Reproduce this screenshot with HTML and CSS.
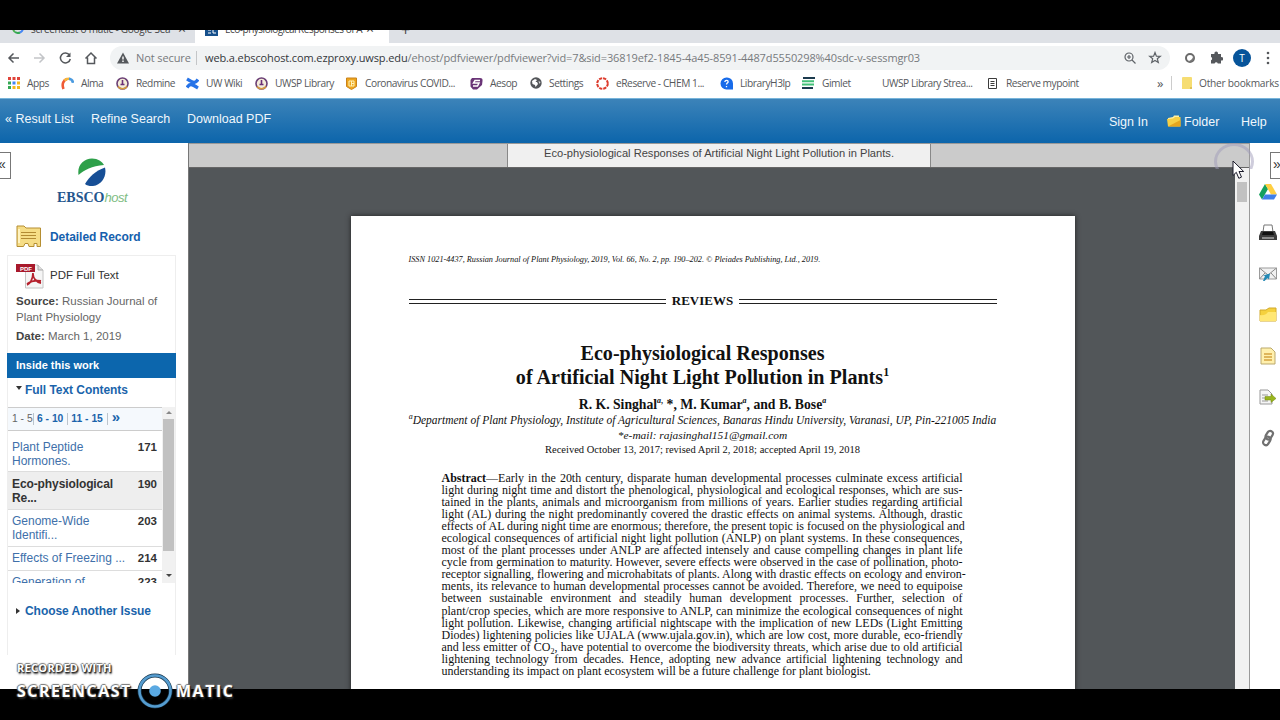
FILE: index.html
```html
<!DOCTYPE html>
<html lang="en">
<head>
    <meta charset="utf-8">
    <title>Eco-physiological Responses of Artificial Night Light Pollution in Plants.</title>
    <link rel="stylesheet" href="styles.css">
</head>
<body>
    <!-- Browser tabs -->
    <div class="tabs">
        <div class="tab tab-search">
            <svg width="12" height="12" viewBox="0 0 12 12" fill="none" stroke-width="2"><path d="M2 3A5 5 0 0 0 3 10" stroke="#4caf50"/><path d="M3 10a5 5 0 0 0 5 .5" stroke="#34a853"/><path d="M8 10.500A5 5 0 0 0 11 6" stroke="#4285f4"/></svg>
            <span class="tab-title">screencast o matic - Google Sea</span><span class="tab-x">×</span>
        </div>
        <div class="tab tab-active">
            <svg width="13" height="14" viewBox="0 0 13 14"><rect width="13" height="14" fill="#16508c"/><path d="M3 5h3M3 8h3M3 11h3M8 4v7h3" stroke="#fff" fill="none"/></svg>
            <span class="tab-title">Eco-physiological Responses of A</span><span class="tab-x">×</span>
        </div>
        <div class="tab-new">+</div>
    </div>

    <!-- Address bar -->
    <div class="toolbar">
        <svg class="nav-icons" width="100" height="16" viewBox="0 0 100 16" fill="none" stroke="#55585c" stroke-width="1.500">
            <path d="M19 8H9M13.500 3.500L9 8l4.500 4.500"/>
            <path d="M34 8h10M39.500 3.500L44 8l-4.500 4.500" stroke="#c3c5c8"/>
            <path d="M69.500 5A5 5 0 1 0 70.300 9"/><path d="M70.500 2.500v4.500h-4.500z" fill="#55585c" stroke="none"/>
            <path d="M85.500 8.500L91 3l5.500 5.500M87.500 7.500v6h7v-6"/>
        </svg>
        <div class="address">
            <svg width="12" height="12" viewBox="0 0 12 12"><path d="M6 .5L12 11.500H0z" fill="#55585c"/><path d="M5.300 4.500h1.400v3H5.300zM5.300 8.500h1.400v1.400H5.300z" fill="#fff"/></svg>
            <span class="not-secure">Not secure</span>
            <span class="url"><b>web.a.ebscohost.com.ezproxy.uwsp.edu</b>/ehost/pdfviewer/pdfviewer?vid=7&amp;sid=36819ef2-1845-4a45-8591-4487d5550298%40sdc-v-sessmgr03</span>
            <svg class="address-actions" width="42" height="14" viewBox="0 0 42 14" fill="none" stroke="#5f6368" stroke-width="1.200"><circle cx="6" cy="6" r="4"/><path d="M9 9l3.500 3.500M4 6h4M6 4v4"/><path d="M32 1.500l1.400 3.600 3.900.2-3 2.400 1 3.800-3.300-2.100-3.300 2.100 1-3.800-3-2.400 3.900-.2z"/></svg>
        </div>
        <div class="toolbar-right">
            <svg width="12" height="12" viewBox="0 0 12 12"><circle cx="6" cy="6" r="4" fill="#fff" stroke="#6a6a6a" stroke-width="2"/><path d="M9.500 3.500a4.500 4.500 0 0 1-6 6q5-1 6-6z" fill="#777"/></svg>
            <svg width="13" height="13" viewBox="0 0 13 13" fill="#55585c"><path d="M1 3h3.500a1.800 1.800 0 1 1 3.400 0H11v3.200a1.700 1.700 0 1 1 0 3.300V12.500H7.800a1.700 1.700 0 0 0-3.200 0H1V9.300a1.700 1.700 0 0 0 0-3.200z"/></svg>
            <span class="avatar">T</span>
            <svg width="4" height="14" viewBox="0 0 4 14" fill="#55585c"><circle cx="2" cy="2" r="1.300"/><circle cx="2" cy="7" r="1.300"/><circle cx="2" cy="12" r="1.300"/></svg>
        </div>
    </div>

    <!-- Bookmarks -->
    <div class="bookmarks">
        <div class="bookmark">
            <svg width="12" height="12" viewBox="0 0 12 12"><g fill="#e0443a"><path d="M0 0h3v3H0zM4.500 0h3v3h-3zM9 0h3v3H9z"/></g><path d="M0 4.500h3v3H0z" fill="#34a853"/><path d="M4.500 4.500h3v3h-3z" fill="#4285f4"/><path d="M9 4.500h3v3H9zM4.500 9h3v3h-3zM9 9h3v3H9z" fill="#f4b91e"/><path d="M0 9h3v3H0z" fill="#34a853"/></svg>
            <span>Apps</span>
        </div>
        <div class="bookmark">
            <svg width="13" height="13" viewBox="0 0 13 13" fill="none" stroke-width="2.600"><path d="M2.500 12C.5 7 2.500 3 6 2" stroke="#ef5a35"/><path d="M3.500 3.500C5 2 7 1.500 9 2" stroke="#f6b73c"/><path d="M8 1.800c2 .2 3.600 1.500 4 4" stroke="#4b9be0"/></svg>
            <span>Alma</span>
        </div>
        <div class="bookmark">
            <svg width="13" height="13" viewBox="0 0 13 13"><circle cx="6.500" cy="6.500" r="5.500" fill="#f4ecda" stroke="#6b3f75" stroke-width="1.600"/><path d="M2 9.500a5.500 5.500 0 0 0 9 0" fill="none" stroke="#d69a3c" stroke-width="1.500"/><path d="M6.500 3v5M4.500 7.500h4" stroke="#6b2f78" stroke-width="1.600"/></svg>
            <span>Redmine</span>
        </div>
        <div class="bookmark">
            <svg width="13" height="13" viewBox="0 0 13 13" fill="none" stroke="#2673e8" stroke-width="3.400"><path d="M1 10.500C4 6 5.500 7 12 11"/><path d="M12 2.500C9 7 7.500 6 1 2"/></svg>
            <span>UW Wiki</span>
        </div>
        <div class="bookmark">
            <svg width="13" height="13" viewBox="0 0 13 13"><circle cx="6.500" cy="6.500" r="5.500" fill="#f4ecda" stroke="#6b3f75" stroke-width="1.600"/><path d="M2 9.500a5.500 5.500 0 0 0 9 0" fill="none" stroke="#d69a3c" stroke-width="1.500"/><path d="M6.500 3v5M4.500 7.500h4" stroke="#6b2f78" stroke-width="1.600"/></svg>
            <span>UWSP Library</span>
        </div>
        <div class="bookmark">
            <svg width="13" height="13" viewBox="0 0 13 13"><path d="M1.500 1h10v8.500l-5 3-5-3z" fill="#eda51d" stroke="#c9821a"/><path d="M4 4h5v5H4zM6 6.500h3M6.500 4v5" fill="none" stroke="#fff2b8"/></svg>
            <span>Coronavirus COVID...</span>
        </div>
        <div class="bookmark">
            <svg width="13" height="13" viewBox="0 0 13 13"><path d="M2 1h8q3 0 2.500 3l-.5 4-5 4.500H3L.5 9.500V3z" fill="#6a3477"/><path d="M10 3.500H5L3.500 6H9L7.500 9H3" fill="none" stroke="#fff" stroke-width="1.500"/></svg>
            <span>Aesop</span>
        </div>
        <div class="bookmark">
            <svg width="12" height="12" viewBox="0 0 12 12"><circle cx="6" cy="6" r="5.700" fill="#54565a"/><path d="M2 4l3-2 2 1-1.500 2H7l1 2-2.500 3L5 8 2.500 7z" fill="#fff"/><path d="M8.500 4l2 1-1 2z" fill="#ddd"/></svg>
            <span>Settings</span>
        </div>
        <div class="bookmark">
            <svg width="13" height="13" viewBox="0 0 13 13"><circle cx="6.500" cy="6.500" r="5.300" fill="none" stroke="#dd3b2c" stroke-width="2" stroke-dasharray="3.200 .96"/></svg>
            <span>eReserve - CHEM 1...</span>
        </div>
        <div class="bookmark">
            <svg width="13" height="13" viewBox="0 0 13 13"><path d="M6.500.5a6 6 0 1 0 0 12H13V6.500a6 6 0 0 0-6.500-6z" fill="#176bea"/><path d="M4.800 5Q5 3.200 6.700 3.300T8 5.300Q6.500 6 6.500 7.500M6.500 9v1.300" fill="none" stroke="#fff" stroke-width="1.300"/></svg>
            <span>LibraryH3lp</span>
        </div>
        <div class="bookmark">
            <svg width="14" height="12" viewBox="0 0 14 12"><path d="M2 0h12v2H2zM1 10h11v2H1z" fill="#1c3b4e"/><path d="M1 3.300h12v2H1zM1 6.600h12v2H1z" fill="#43c078"/></svg>
            <span>Gimlet</span>
        </div>
        <div class="bookmark"><span>UWSP Library Strea...</span></div>
        <div class="bookmark">
            <svg class="doc" width="9" height="11" viewBox="0 0 9 11" fill="none" stroke="#3c3c3c"><path d="M.5.5h8v10h-8zM2.500 3.500h4M2.500 5.500h4M2.500 7.500h4"/></svg>
            <span>Reserve mypoint</span>
        </div>
        <div class="bookmark more">»</div>
        <div class="bookmark other">
            <svg width="10" height="12" viewBox="0 0 10 12"><path d="M0 1q0-1 1-1h8q1 0 1 1v11H0z" fill="#f6dd72"/><path d="M8 10h2v2H8z" fill="#e0c256"/></svg>
            <span>Other bookmarks</span>
        </div>
    </div>

    <!-- EBSCO header -->
    <div class="header">
        <div class="header-left">
            <a class="h-result">« Result List</a>
            <a class="h-refine">Refine Search</a>
            <a class="h-download">Download PDF</a>
        </div>
        <div class="header-right">
            <a class="h-sign">Sign In</a>
            <a class="h-folder"><svg width="14" height="12" viewBox="0 0 14 12"><path d="M1 3l5-1 1-1.500h5V5H1z" fill="#fff0a5"/><path d="M0 4l6-.5L8 2h5.500v9.500H1z" fill="#f5cf45"/><path d="M1 11.500L13.500 5v6.500z" fill="#e5a51e"/></svg><span>Folder</span></a>
            <a class="h-help">Help</a>
        </div>
    </div>

    <div class="main">
        <!-- Left column -->
        <div class="sidebar">
            <div class="collapse">«</div>
            <div class="logo">
                <svg width="28" height="29" viewBox="0 0 28 29"><path d="M.5 17C-1 7 6 .5 14 .5c6 0 10 3 12 6.500C14 8 6 12 .5 17z" fill="#2ea04a"/><path d="M27 9.500C29 18 24 27 15 28c-3 .3-6-.3-8-2C11 19 17 13 27 9.500z" fill="#174f96"/></svg>
                <div class="logo-text"><b>EBSCO</b><i>host</i></div>
            </div>
            <div class="record">
                <svg width="26" height="22" viewBox="0 0 26 22"><path d="M1 1h7l2 2h14.500v18.500H21v-3h-3v3h-5l-1-3H9l-1.500 3H1z" fill="#f6dd86" stroke="#b58e32"/><path d="M3 4v14" stroke="#fff3c0" stroke-width="2"/><path d="M5 7.500h15M5 10.500h15M5 13.500h15" stroke="#b38b33"/></svg>
                <a>Detailed Record</a>
            </div>
            <div class="box">
                <div class="fulltext">
                    <svg width="28" height="26" viewBox="0 0 28 26"><path d="M9.500 2H22l5 5v18H9.500z" fill="#f5f5f5" stroke="#c4c4c4"/><path d="M22 2v5h5" fill="#ddd" stroke="#aaa"/><path d="M0 1h19v8H0z" fill="#a8192b"/><path d="M11 22c3-1 6-6 6-12M17 11c0 4 3 8 8 9M11 21c4-3 9-4 14-3" fill="none" stroke="#b5202c" stroke-width="1.800"/><text x="4" y="7.500" class="pdf-label">PDF</text></svg>
                    <span>PDF Full Text</span>
                </div>
                <p class="meta source"><b>Source:</b> Russian Journal of<br>Plant Physiology</p>
                <p class="meta"><b>Date:</b> March 1, 2019</p>
                <h3>Inside this work</h3>
                <div class="contents-title"><span class="tri-down"></span><a>Full Text Contents</a></div>
                <div class="contents">
                    <div class="contents-list">
                        <div class="pager"><span>1 - 5</span><a>6 - 10</a><a>11 - 15</a><a class="next">»</a></div>
                        <div class="entry first"><a>Plant Peptide<br>Hormones.</a><b>171</b></div>
                        <div class="entry current"><a>Eco-physiological<br>Re...</a><b>190</b></div>
                        <div class="entry third"><a>Genome-Wide<br>Identifi...</a><b>203</b></div>
                        <div class="entry fourth"><a>Effects of Freezing ...</a><b>214</b></div>
                        <div class="entry last"><a>Generation of</a><b>223</b></div>
                    </div>
                    <div class="scroll">
                        <span class="arrow-up"></span>
                        <span class="scroll-thumb"></span>
                        <span class="arrow-down"></span>
                    </div>
                </div>
                <div class="choose"><span class="tri-right"></span><a>Choose Another Issue</a></div>
            </div>
        </div>

        <!-- PDF viewer -->
        <div class="viewer">
            <div class="viewer-title"><span>Eco-physiological Responses of Artificial Night Light Pollution in Plants.</span></div>
            <div class="viewer-body">
                <div class="canvas">
                    <div class="page">
                        <div class="issn">ISSN 1021-4437, Russian Journal of Plant Physiology, 2019, Vol. 66, No. 2, pp. 190–202. © Pleiades Publishing, Ltd., 2019.</div>
                        <div class="reviews"><span class="rule"></span><b>REVIEWS</b><span class="rule"></span></div>
                        <h1>Eco-physiological Responses<br>of Artificial Night Light Pollution in Plants<sup>1</sup></h1>
                        <div class="authors">R. K. Singhal<sup><i>a</i>,</sup> *, M. Kumar<sup><i>a</i></sup>, and B. Bose<sup><i>a</i></sup></div>
                        <div class="dept"><sup>a</sup>Department of Plant Physiology, Institute of Agricultural Sciences, Banaras Hindu University, Varanasi, UP, Pin-221005 India</div>
                        <div class="email">*e-mail: rajasinghal151@gmail.com</div>
                        <div class="received">Received October 13, 2017; revised April 2, 2018; accepted April 19, 2018</div>
                        <div class="abstract">
                            <div><b>Abstract</b>—Early in the 20th century, disparate human developmental processes culminate excess artificial</div>
                            <div>light during night time and distort the phenological, physiological and ecological responses, which are sus-</div>
                            <div>tained in the plants, animals and microorganism from millions of years. Earlier studies regarding artificial</div>
                            <div>light (AL) during the night predominantly covered the drastic effects on animal systems. Although, drastic</div>
                            <div>effects of AL during night time are enormous; therefore, the present topic is focused on the physiological and</div>
                            <div>ecological consequences of artificial night light pollution (ANLP) on plant systems. In these consequences,</div>
                            <div>most of the plant processes under ANLP are affected intensely and cause compelling changes in plant life</div>
                            <div>cycle from germination to maturity. However, severe effects were observed in the case of pollination, photo-</div>
                            <div>receptor signalling, flowering and microhabitats of plants. Along with drastic effects on ecology and environ-</div>
                            <div>ments, its relevance to human developmental processes cannot be avoided. Therefore, we need to equipoise</div>
                            <div>between sustainable environment and steadily human development processes. Further, selection of</div>
                            <div>plant/crop species, which are more responsive to ANLP, can minimize the ecological consequences of night</div>
                            <div>light pollution. Likewise, changing artificial nightscape with the implication of new LEDs (Light Emitting</div>
                            <div>Diodes) lightening policies like UJALA (www.ujala.gov.in), which are low cost, more durable, eco-friendly</div>
                            <div>and less emitter of CO<sub>2</sub>, have potential to overcome the biodiversity threats, which arise due to old artificial</div>
                            <div>lightening technology from decades. Hence, adopting new advance artificial lightening technology and</div>
                            <div class="end">understanding its impact on plant ecosystem will be a future challenge for plant biologist.</div>
                        </div>
                    </div>
                </div>
                <div class="viewer-scroll"><span class="thumb"></span></div>
            </div>
        </div>

        <!-- Tools -->
        <div class="tools">
            <div class="expand">»</div>
            <svg width="18" height="16" viewBox="0 0 18 16"><path d="M6 0L0 10.500 3 15.500 9 5z" fill="#14a05e"/><path d="M6 0h6l6 10.500h-6z" fill="#ffcf42"/><path d="M6 10.500h12L15 15.500H3z" fill="#3f7fe8"/></svg>
            <svg width="18" height="18" viewBox="0 0 18 18"><path d="M4 8L5 1h8l1 7z" fill="#fff" stroke="#777"/><path d="M2 7h14l2 5v4H0v-4z" fill="#3c3c3c"/><path d="M4 8h10l1 3H3z" fill="#111"/><path d="M3 14h12" stroke="#ddd"/></svg>
            <svg width="18" height="16" viewBox="0 0 18 16"><path d="M.5 2h17v11H.5z" fill="#f1f1f1" stroke="#9b9b9b"/><path d="M.5 2L9 9l8.500-7M.5 13L6 7M17.500 13L12 7" fill="none" stroke="#888"/><path d="M4 15l2-5-2-.5 7-2-1 6-1.500-1.500-3 3z" fill="#2389b5"/></svg>
            <svg width="18" height="16" viewBox="0 0 18 16"><path d="M1 15V4h6l3-2h7v13z" fill="#f5d13e" stroke="#d2aa2a"/><path d="M1 9q5 1 8-3h8v9H1z" fill="#ffe775"/></svg>
            <svg width="16" height="18" viewBox="0 0 16 18"><path d="M1 1h10l4 4v12H1z" fill="#fff0ad" stroke="#bba96c"/><path d="M4 7h8M4 10h8M4 13h8" stroke="#d5a33f" stroke-width="1.500"/></svg>
            <svg width="18" height="16" viewBox="0 0 18 16"><path d="M1 1h8l4 4v10H1z" fill="#f5f5f5" stroke="#999"/><path d="M3 6h6M3 9h4M3 12h6" stroke="#999"/><path d="M6 7.500h6V5l5 4.500-5 4v-2.500H6z" fill="#99b51d" stroke="#71870f" stroke-width=".5"/></svg>
            <svg width="14" height="18" viewBox="0 0 14 18" fill="none" stroke="#707070" stroke-width="2.200"><rect x="5.500" y="1.500" width="5.500" height="9" rx="2.700" transform="rotate(32 8 6)"/><rect x="3" y="7.500" width="5.500" height="9" rx="2.700" transform="rotate(32 6 12)"/></svg>
        </div>
    </div>

    <!-- Recorder watermark -->
    <div class="watermark">
        <div class="recorded">RECORDED WITH</div>
        <div class="brand"><span class="screencast">SCREENCAST</span>
            <svg width="36" height="36" viewBox="0 0 36 36"><circle cx="18" cy="18" r="15.500" fill="none" stroke="#16374f" stroke-width="4"/><circle cx="18" cy="18" r="15.500" fill="none" stroke="#559ccf" stroke-width="2.600"/><circle cx="18" cy="18" r="5.800" fill="#5aa9e2"/></svg>
            <span class="matic">MATIC</span></div>
    </div>

    <!-- Mouse -->
    <div class="pointer-ring"></div>
    <svg class="pointer" width="13" height="20" viewBox="0 0 13 20"><path d="M1 1v14.500l3.300-3.200 2.500 6 2.700-1.200-2.500-5.600h4.700z" fill="#fff" stroke="#1a1a2a"/></svg>
</body>
</html>
```
FILE: styles.css
```css
* {
    box-sizing: border-box;
}

body {
    margin: 0;
    width: 1280px;
    height: 720px;
    overflow: hidden;
    position: relative;
    background-color: #000;
    padding-top: 30px;
    font-family: "Liberation Sans", Arial, sans-serif;
    font-size: 12px;
    color: #333;
}

svg {
    flex: none;
    display: block;
}

/* Browser */
.tabs {
    height: 13px;
    background-color: #dee1e6;
    display: flex;
    overflow: hidden;
    font: 10px/14px "Open Sans", sans-serif;
    color: #444;
}

.tab {
    height: 26px;
    margin-top: -8px;
    display: flex;
    gap: 7px;
    padding-left: 12px;
    white-space: nowrap;
}

.tab-search {
    width: 195px;
}

.tab-active {
    width: 194px;
    background-color: #fff;
    padding-left: 10px;
}

.tab-title {
    width: 140px;
    letter-spacing: -.25px;
}

.tab-x {
    font-size: 14px;
}

.tab-active .tab-title {
    width: 134px;
    letter-spacing: -.5px;
}

.tab-new {
    margin: -7px 0 0 12px;
    font-size: 16px;
}

.toolbar {
    height: 29px;
    background-color: #fff;
    display: flex;
    align-items: center;
    font-family: "Open Sans", sans-serif;
}

.nav-icons {
    margin-right: 10px;
}

.address {
    width: 1060px;
    height: 24px;
    border-radius: 12px;
    background-color: #f1f3f4;
    display: flex;
    align-items: center;
    padding-left: 7px;
    font-size: 11px;
    white-space: nowrap;
}

.not-secure {
    width: 61px;
    margin-left: 7px;
    padding-right: 6px;
    border-right: 1px solid #c4c6c8;
    line-height: 14px;
    color: #77797c;
    letter-spacing: -.1px;
}

.url {
    width: 716px;
    margin-left: 8px;
    color: #777a7d;
    letter-spacing: -.12px;
}

.url b {
    font-weight: normal;
    color: #34373b;
}

.address-actions {
    margin-left: auto;
    margin-right: 5px;
}

.toolbar-right {
    display: flex;
    align-items: center;
    margin-left: 14px;
}

.toolbar-right svg:nth-child(2) {
    margin-left: 14px;
}

.avatar {
    width: 18px;
    height: 18px;
    border-radius: 50%;
    background-color: #07549a;
    color: #fff;
    font-size: 10px;
    line-height: 18px;
    text-align: center;
    margin: 0 15px 0 10px;
}

.bookmarks {
    height: 26px;
    background-color: #fff;
    display: grid;
    grid-template-columns: 53px 55px 70px 69px 90px 125px 60px 66px 124px 81px 81px 106px 169px 14px 1fr;
    padding: 0 0 4px 8px;
    align-items: center;
    font: 10.200px/14px "Open Sans", sans-serif;
    letter-spacing: -.45px;
    color: #56585b;
    white-space: nowrap;
}

.bookmark {
    display: flex;
    align-items: center;
}

.bookmark span {
    margin-left: 7px;
}

.bookmark:nth-child(12) span {
    margin-left: 0;
}

.more {
    font-size: 13px;
}

.other {
    border-left: 1px solid #ccc;
    padding-left: 10px;
}

.bookmark.other span {
    letter-spacing: -.25px;
}

.bookmark .doc + span {
    margin-left: 9px;
}

/* EBSCO header */
.header {
    height: 45px;
    background: linear-gradient(#3c83b9, #0c65ab);
    border-top: 1px solid #77b4da;
    display: flex;
    justify-content: space-between;
    color: #f0f7fc;
    font-size: 12.500px;
}

.header-left {
    display: flex;
    padding: 13px 0 0 5px;
}

.h-result {
    width: 86px;
}

.h-refine {
    width: 96px;
}

.header-right {
    display: flex;
    padding: 16px 0 0;
}

.h-sign {
    width: 58px;
}

.h-folder {
    width: 74px;
    display: flex;
    gap: 3px;
}

.h-help {
    width: 39px;
}

/* Main area */
.main {
    height: 546px;
    display: flex;
    background-color: #fff;
}

.sidebar {
    width: 188px;
    height: 546px;
    position: relative;
    padding-top: 15px;
}

.collapse {
    position: absolute;
    left: -3px;
    top: 9px;
    width: 14px;
    height: 27px;
    border: 1px solid #777;
    font-size: 14px;
    line-height: 23px;
}

.logo {
    display: flex;
    flex-direction: column;
    align-items: center;
    width: 184px;
}

.logo-text {
    display: flex;
    align-items: baseline;
    margin-top: 3px;
    font: 14px/16px "Liberation Serif", serif;
    color: #24558d;
}

.logo-text i {
    font: italic 13px/16px "Liberation Sans", sans-serif;
    color: #7dbc82;
    letter-spacing: -.5px;
}

.record {
    display: flex;
    align-items: center;
    height: 22px;
    margin: 19px 0 0 16px;
    font-size: 12px;
    font-weight: bold;
    color: #1560ad;
    gap: 8px;
}

.record a {
    padding-top: 2px;
    letter-spacing: -.05px;
}

.box {
    margin: 8px 0 0 7px;
    width: 169px;
    height: 400px;
    border: 1px solid #eee;
    border-bottom: 0;
}

.fulltext {
    display: flex;
    align-items: center;
    gap: 6px;
    padding: 6px 0 0 8px;
    height: 34px;
    color: #333;
    font-size: 11.500px;
}

.fulltext span {
    padding-bottom: 3px;
}

.pdf-label {
    font: bold 6px "Liberation Sans", sans-serif;
    fill: #fff;
}

.meta {
    margin: 3px 0 0 8px;
    line-height: 16px;
    font-size: 11.500px;
    color: #666;
}

.meta b {
    color: #444;
}

.box h3 {
    margin: 9px -1px 0;
    height: 25px;
    background-color: #0c66ad;
    color: #fff;
    font-size: 11px;
    line-height: 24px;
    padding-left: 9px;
}

.contents-title,
.choose {
    display: flex;
    color: #1a64ab;
    font-weight: bold;
    line-height: 24px;
    letter-spacing: -.05px;
}

.contents-title {
    height: 29px;
    padding-left: 8px;
}

.tri-down {
    border: 3px solid transparent;
    border-top: 4px solid #333;
    height: 4px;
    margin: 8px 3px 0 0;
}

.contents {
    display: flex;
    height: 176px;
    overflow: hidden;
}

.contents-list {
    width: 154px;
}

.pager {
    height: 24px;
    background-color: #f5f9fd;
    border-top: 1px solid #ccc;
    border-bottom: 1px solid #ccc;
    font-size: 10.300px;
    line-height: 11px;
    padding: 5px 0 0 4px;
    display: flex;
    color: #666;
}

.pager span {
    width: 21px;
}

.pager a {
    height: 12px;
    color: #1a64ab;
    font-weight: bold;
    border-left: 1px solid #bcc4cc;
    padding: 0 4px 0 3px;
}

.pager .next {
    font-size: 15px;
    line-height: 8px;
    padding-left: 4px;
}

.entry {
    display: flex;
    justify-content: space-between;
    line-height: 14px;
    padding: 4px 5px 0 4px;
    border-bottom: 1px solid #ddd;
    color: #333;
}

.entry a {
    color: #4070aa;
}

.entry b {
    font-size: 11.500px;
}

.first {
    height: 41px;
    padding-top: 9px;
}

.current {
    height: 38px;
    padding-top: 5px;
    background-color: #eee;
}

.entry.current a {
    color: #333;
    font-weight: bold;
    letter-spacing: -.1px;
}

.third {
    height: 37px;
}

.fourth {
    height: 24px;
}

.last {
    height: 30px;
}

.scroll {
    width: 13px;
    background-color: #f1f1f1;
    display: flex;
    flex-direction: column;
    align-items: center;
}

.arrow-up {
    border: 3px solid transparent;
    border-bottom-color: #888;
    margin-top: 1px;
}

.scroll-thumb {
    width: 11px;
    height: 132px;
    margin-top: 5px;
    background-color: #c1c1c1;
}

.arrow-down {
    border: 3px solid transparent;
    border-top-color: #444;
    margin-top: 23px;
}

.choose {
    margin-top: 16px;
    padding-left: 8px;
}

.tri-right {
    border: 3px solid transparent;
    border-left: 4px solid #333;
    height: 6px;
    margin: 9px 2px 0 0;
}

/* PDF viewer */
.viewer {
    width: 1062px;
    border-left: 1px solid #777;
    border-right: 1px solid #999;
}

.viewer-title {
    height: 25px;
    background-color: #cbcbcb;
    border-top: 1px solid #999;
    border-bottom: 1px solid #666;
    display: flex;
    padding-left: 318px;
}

.viewer-title span {
    width: 424px;
    background-color: #f0f0f0;
    border-left: 1px solid #888;
    border-right: 1px solid #888;
    text-align: center;
    line-height: 19px;
    font-size: 11.130px;
    color: #444;
}

.viewer-body {
    display: flex;
    height: 521px;
}

.canvas {
    width: 1047px;
    background-color: #525659;
    overflow: hidden;
}

.page {
    margin: 48px 0 0 161.500px;
    width: 724px;
    height: 480px;
    padding: 37px 78px 0 58px;
    background-color: #fff;
    box-shadow: 0 0 5px #222;
    font-family: "Liberation Serif", "Times New Roman", serif;
    color: #111;
    text-align: center;
    white-space: nowrap;
}

.page sup,
.page sub {
    line-height: 0;
}

.issn {
    text-align: left;
    font-size: 8.240px;
    line-height: 14px;
    font-style: italic;
}

.reviews {
    display: flex;
    align-items: center;
    gap: 6px;
    margin-top: 26px;
    font-size: 13px;
    line-height: 16px;
}

.rule {
    flex: 1;
    height: 5px;
    border-top: 1px solid #222;
    border-bottom: 1px solid #222;
}

.page h1 {
    margin: 33px 0 0;
    font-size: 20.100px;
    line-height: 23.500px;
}

.page h1 sup {
    font-size: 12px;
}

.authors {
    margin-top: 7px;
    font-size: 13.700px;
    line-height: 17px;
    font-weight: bold;
}

.authors sup {
    font-size: 8px;
}

.dept {
    font-size: 11.470px;
    line-height: 15px;
    font-style: italic;
}

.dept sup {
    font-size: 8px;
}

.email {
    font-size: 11.400px;
    line-height: 15px;
    font-style: italic;
}

.received {
    font-size: 10.500px;
    line-height: 13px;
}

.abstract {
    width: 521px;
    margin: 16px 0 0 33px;
    font-size: 11.990px;
    line-height: 12.050px;
}

.abstract div {
    text-align: justify;
    text-align-last: justify;
    height: 12.050px;
}

.abstract .end {
    text-align-last: left;
}

.abstract sub {
    font-size: 8px;
}

.viewer-scroll {
    width: 14px;
    background-color: #f1f1f1;
    padding: 14px 1px 0 2px;
}

.thumb {
    display: block;
    height: 20px;
    width: 10px;
    background-color: #c1c1c1;
}

/* Tool icons */
.tools {
    width: 30px;
    overflow: hidden;
    position: relative;
    display: flex;
    flex-direction: column;
    align-items: center;
    justify-content: space-between;
    padding: 41px 0 242px 6px;
}

.expand {
    position: absolute;
    left: 20px;
    top: 9px;
    width: 14px;
    height: 27px;
    border: 1px solid #777;
    padding-left: 2px;
    font-size: 14px;
    line-height: 23px;
}

/* Watermark over the page */
.watermark {
    position: absolute;
    left: 17px;
    top: 660px;
    color: #fff;
    font-family: "Open Sans", sans-serif;
    font-weight: bold;
    text-shadow: 1px 1px 1px #222, -1px 0 1px #777, 0 -1px 1px #777, 1px 2px 2px #333;
}

.recorded {
    font-size: 11px;
    line-height: 16px;
    letter-spacing: .3px;
}

.brand {
    display: flex;
    align-items: center;
    margin-top: -3px;
    font-size: 16px;
    letter-spacing: 1.500px;
}

.screencast {
    width: 116px;
}

.brand svg {
    margin: 0 3px 0 4px;
}

.pointer-ring {
    position: absolute;
    left: 1214px;
    top: 143px;
    width: 40px;
    height: 37px;
    border: 3px solid rgba(160, 155, 185, .5);
    border-radius: 50%;
    clip-path: inset(0 0 11px 0);
}

.pointer {
    position: absolute;
    left: 1232px;
    top: 160px;
}
```
